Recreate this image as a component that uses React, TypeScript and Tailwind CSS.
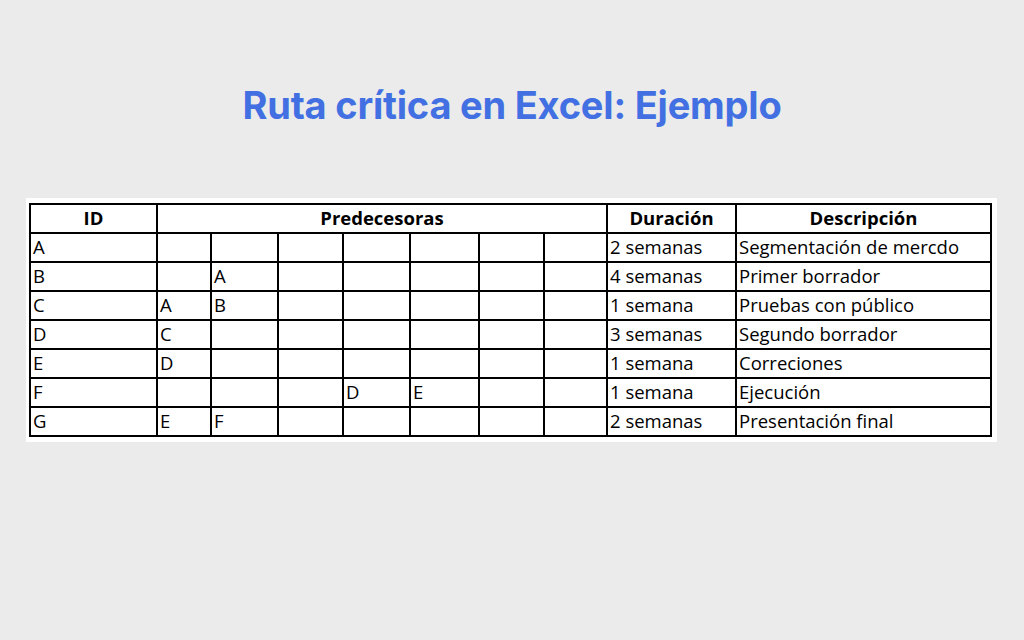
const rows = [
  { id: "A", pred: ["", "", "", "", "", "", ""], dur: "2 semanas", desc: "Segmentación de mercdo" },
  { id: "B", pred: ["", "A", "", "", "", "", ""], dur: "4 semanas", desc: "Primer borrador" },
  { id: "C", pred: ["A", "B", "", "", "", "", ""], dur: "1 semana", desc: "Pruebas con público" },
  { id: "D", pred: ["C", "", "", "", "", "", ""], dur: "3 semanas", desc: "Segundo borrador" },
  { id: "E", pred: ["D", "", "", "", "", "", ""], dur: "1 semana", desc: "Correciones" },
  { id: "F", pred: ["", "", "", "D", "E", "", ""], dur: "1 semana", desc: "Ejecución" },
  { id: "G", pred: ["E", "F", "", "", "", "", ""], dur: "2 semanas", desc: "Presentación final" },
];

const predWidths = [54, 67, 65, 67, 69, 65, 63];

export default function App() {
  return (
    <div className="w-[1024px] h-[640px] bg-[#ebebeb] overflow-hidden">
      <h1 className="pt-[77px] text-center text-[38px] leading-[57px] font-bold text-[#4270e2] tracking-[-0.2px] font-['Inter',sans-serif]">
        Ruta crítica en Excel: Ejemplo
      </h1>
      <div className="mt-[64px] ml-[26px] w-[971px] bg-white pt-[5px] pb-[5px] pl-[3px]">
        <table className="table-fixed border-collapse text-[18.5px] leading-none text-black font-['Open_Sans',sans-serif]">
          <colgroup>
            <col style={{ width: 127 }} />
            {predWidths.map((w, i) => (
              <col key={i} style={{ width: w }} />
            ))}
            <col style={{ width: 129 }} />
            <col style={{ width: 255 }} />
          </colgroup>
          <thead>
            <tr className="h-[29px]">
              <th className="border-2 border-black font-bold text-center p-0">ID</th>
              <th colSpan={7} className="border-2 border-black font-bold text-center p-0">
                Predecesoras
              </th>
              <th className="border-2 border-black font-bold text-center p-0">Duración</th>
              <th className="border-2 border-black font-bold text-center p-0">Descripción</th>
            </tr>
          </thead>
          <tbody>
            {rows.map((r) => (
              <tr key={r.id} className="h-[29px]">
                <td className="border-2 border-black px-[2px] py-0">{r.id}</td>
                {r.pred.map((p, i) => (
                  <td key={i} className="border-2 border-black px-[2px] py-0">
                    {p}
                  </td>
                ))}
                <td className="border-2 border-black px-[2px] py-0">{r.dur}</td>
                <td className="border-2 border-black px-[2px] py-0">{r.desc}</td>
              </tr>
            ))}
          </tbody>
        </table>
      </div>
    </div>
  );
}
